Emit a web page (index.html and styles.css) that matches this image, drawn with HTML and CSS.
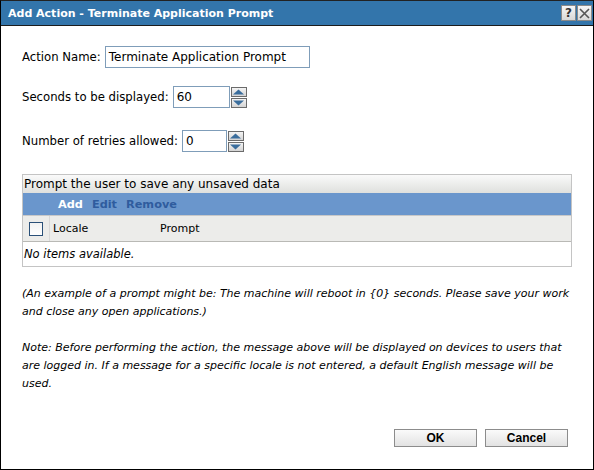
FILE: index.html
```html
<!DOCTYPE html>
<html>
<head>
<meta charset="utf-8">
<link rel="stylesheet" href="styles.css">
</head>
<body>
<div class="dialog">
  <div class="titlebar">
    <span class="title">Add Action - Terminate Application Prompt</span>
    <div class="tbtns">
      <span class="tbtn help">?</span>
      <span class="tbtn close"><svg width="11" height="11" viewBox="0 0 11 11"><path d="M1 1L10 10M10 1L1 10" stroke="#555" stroke-width="1.6"/></svg></span>
    </div>
  </div>
  <div class="content">
    <div class="row r1">
      <label class="lbl">Action Name:</label>
      <div class="input name">Terminate Application Prompt</div>
    </div>
    <div class="row r2">
      <label class="lbl">Seconds to be displayed:</label>
      <div class="input num">60</div>
      <div class="spin">
        <span class="sb"><svg width="13" height="6" viewBox="0 0 13 6"><path d="M6.5 0.5L12 5.5H1Z" fill="#3a6d9c"/></svg></span>
        <span class="sb"><svg width="13" height="6" viewBox="0 0 13 6"><path d="M6.5 5.5L12 0.5H1Z" fill="#3a6d9c"/></svg></span>
      </div>
    </div>
    <div class="row r3">
      <label class="lbl">Number of retries allowed:</label>
      <div class="input num2">0</div>
      <div class="spin">
        <span class="sb"><svg width="13" height="6" viewBox="0 0 13 6"><path d="M6.5 0.5L12 5.5H1Z" fill="#3a6d9c"/></svg></span>
        <span class="sb"><svg width="13" height="6" viewBox="0 0 13 6"><path d="M6.5 5.5L12 0.5H1Z" fill="#3a6d9c"/></svg></span>
      </div>
    </div>
    <div class="table">
      <div class="tcap">Prompt the user to save any unsaved data</div>
      <div class="ttool"><span class="tl add">Add</span><span class="tl">Edit</span><span class="tl">Remove</span></div>
      <div class="thead">
        <div class="hc chk"><span class="cb"></span></div>
        <div class="hc loc">Locale</div>
        <div class="hc pr">Prompt</div>
      </div>
      <div class="tbody">No items available.</div>
    </div>
    <p class="note">(An example of a prompt might be: The machine will reboot in {0} seconds. Please save your work and close any open applications.)</p>
    <p class="note n2">Note: Before performing the action, the message above will be displayed on devices to users that are logged in. If a message for a specific locale is not entered, a default English message will be used.</p>
    <div class="buttons">
      <button class="btn">OK</button>
      <button class="btn">Cancel</button>
    </div>
  </div>
</div>
</body>
</html>
```
FILE: styles.css
```css
html, body { margin: 0; padding: 0; background: #fff; }
body { width: 594px; height: 470px; overflow: hidden; font-family: "DejaVu Sans", Verdana, sans-serif; font-size: 11px; color: #000; }
.dialog { box-sizing: border-box; width: 594px; height: 470px; border: 1px solid #000; border-top-color: #222; display: flex; flex-direction: column; }
.titlebar { height: 24px; background: #3375ab; border-bottom: 1px solid #1c1c1c; display: flex; align-items: center; justify-content: space-between; padding-left: 7px; padding-right: 1px; }
.title { color: #fff; font-weight: bold; font-size: 11px; }
.tbtns { display: flex; gap: 1px; }
.tbtn { width: 15px; height: 16px; box-sizing: border-box; background: linear-gradient(#f6f6f6, #d8d8d8); border: 1px solid #8a8a8a; display: flex; align-items: center; justify-content: center; font-weight: bold; font-size: 12px; color: #333; }
.content { padding: 20px 21px 0 21px; flex: 1; display: flex; flex-direction: column; }
.row { display: flex; align-items: center; }
.lbl { margin-right: 4px; font-size: 11.7px; }
.input { box-sizing: border-box; height: 22px; border: 1px solid #7f9db9; padding: 0 3px; display: flex; align-items: center; font-size: 12px; }
.name { width: 205px; }
.num { width: 57px; }
.num2 { width: 45px; }
.spin { display: flex; flex-direction: column; gap: 1px; margin-left: 1px; }
.sb { width: 16px; height: 10px; box-sizing: border-box; border: 1px solid #6b6b6b; background: linear-gradient(#f4f4f4, #d4d4d4); display: flex; align-items: center; justify-content: center; }
.r2 { margin-top: 18px; }
.r3 { margin-top: 22px; }
.table { margin-top: 22px; border: 1px solid #c4c4c4; width: 550px; box-sizing: border-box; }
.tcap { height: 18px; line-height: 18px; padding-left: 1px; background: linear-gradient(#fafafa, #dfe0dd); font-size: 12px; }
.ttool { height: 22px; background: #6a96cc; display: flex; align-items: center; padding-left: 35px; gap: 9px; font-weight: bold; font-size: 11.3px; }
.tl { color: #2f5c9e; }
.tl.add { color: #fff; }
.thead { height: 25px; background: #ececea; border-top: 1px solid #c8c8c8; border-bottom: 1px solid #b9b9b5; display: flex; align-items: center; }
.hc { height: 100%; display: flex; align-items: center; }
.chk { width: 26px; justify-content: center; border-right: 1px solid #d8d8d8; }
.cb { width: 12px; height: 12px; border: 1px solid #2a5078; background: linear-gradient(#f2f2f2, #fff); }
.loc { padding-left: 3px; width: 107px; }
.pr { }
.tbody { height: 24px; line-height: 24px; padding-left: 1px; font-style: italic; font-size: 11.5px; }
.note { margin: 18px 0 0 0; font-style: italic; line-height: 18px; }
.note.n2 { margin-top: 18px; }
.buttons { display: flex; justify-content: flex-end; gap: 8px; margin-top: auto; margin-bottom: 22px; padding-right: 4px; }
.btn { width: 83px; height: 18px; font-family: "Liberation Sans", Arial, sans-serif; font-weight: bold; font-size: 12px; border: 1px solid #8c8c8c; background: linear-gradient(#fafafa, #e2e2e2); padding: 0; color: #000; }
```
